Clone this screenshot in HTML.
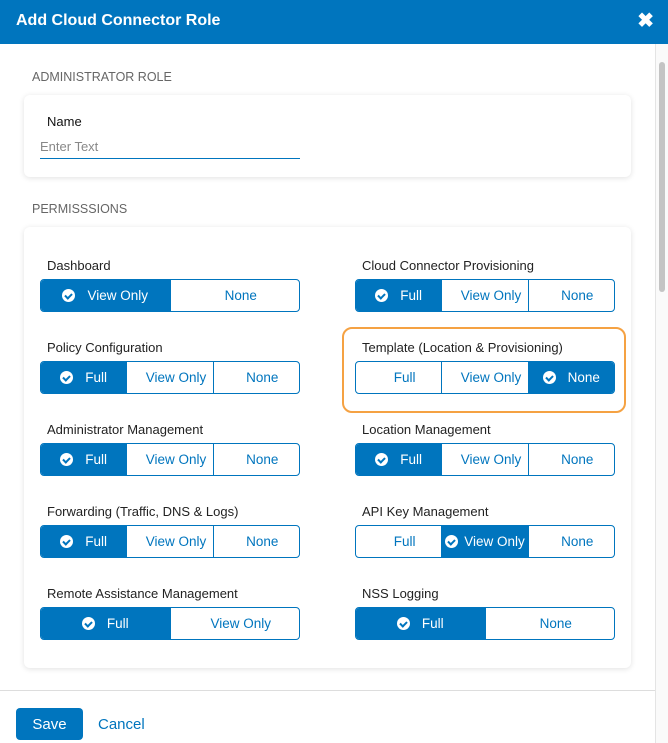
<!DOCTYPE html><html><head><style>
*{box-sizing:border-box;margin:0;padding:0}
body{width:668px;height:743px;overflow:hidden;background:#fff;font-family:"Liberation Sans",sans-serif;position:relative}
.hdr{position:absolute;left:0;top:0;width:668px;height:44px;background:#0075be;color:#fff;font-weight:bold;font-size:16px;line-height:42px;padding-left:16px}
.x{position:absolute;right:14px;top:0;font-size:20px}
.sb{position:absolute;left:655px;top:44px;width:13px;height:699px;border-left:1px solid #e4e4e4;background:#fafafa}
.sb div{position:absolute;left:3px;top:18px;width:6px;height:230px;border-radius:3px;background:#c4c4c4}
.sec{position:absolute;left:32px;font-size:12.5px;color:#666}
.card{position:absolute;left:24px;width:607px;background:#fff;border-radius:6px;box-shadow:0 1px 6px rgba(0,0,0,.12)}
.lbl{position:absolute;font-size:13px;color:#222}
.grp{position:absolute;height:33px;width:260px;display:flex;border:1px solid #0075be;border-radius:4px;overflow:hidden}
.grp div{flex:1 1 0;min-width:0;display:flex;align-items:center;justify-content:center;font-size:13.5px;color:#0075be;border-left:1px solid #0075be;white-space:nowrap}
.grp div:first-child{border-left:none}
.grp div:not(.on){text-indent:12px}
.grp .on{background:#0075be;color:#fff}
.ck{display:inline-block;width:13px;height:13px;border-radius:50%;background:#fff;margin-right:12px;position:relative;flex:none}
.ck:after{content:"";position:absolute;left:4px;top:2.5px;width:3px;height:5px;border:solid #0075be;border-width:0 2px 2px 0;transform:rotate(45deg)}
</style></head><body>
<div class="hdr">Add Cloud Connector Role<span class="x">✖</span></div>
<div class="sb"><div></div></div>
<div class="sec" style="top:70px">ADMINISTRATOR ROLE</div>
<div class="card" style="top:95px;height:82px">
<div class="lbl" style="left:23px;top:19px;font-size:13px;color:#111">Name</div>
<div style="position:absolute;left:16px;top:44px;font-size:13px;color:#888">Enter Text</div>
<div style="position:absolute;left:16px;top:63px;width:260px;height:1px;background:#0075be"></div>
</div>
<div class="sec" style="top:202px">PERMISSSIONS</div>
<div class="card" style="top:227px;height:441px"></div>
<div style="position:absolute;left:342px;top:327px;width:284px;height:86px;border:2px solid #f5a243;border-radius:10px"></div>

<div class="lbl" style="left:47px;top:258px">Dashboard</div>
<div class="grp" style="left:40px;top:279px"><div class="on"><span class="ck"></span>View Only</div><div>None</div></div>
<div class="lbl" style="left:362px;top:258px">Cloud Connector Provisioning</div>
<div class="grp" style="left:355px;top:279px"><div class="on"><span class="ck"></span>Full</div><div>View Only</div><div>None</div></div>

<div class="lbl" style="left:47px;top:340px">Policy Configuration</div>
<div class="grp" style="left:40px;top:361px"><div class="on"><span class="ck"></span>Full</div><div>View Only</div><div>None</div></div>
<div class="lbl" style="left:362px;top:340px">Template (Location &amp; Provisioning)</div>
<div class="grp" style="left:355px;top:361px"><div>Full</div><div>View Only</div><div class="on"><span class="ck"></span>None</div></div>

<div class="lbl" style="left:47px;top:422px">Administrator Management</div>
<div class="grp" style="left:40px;top:443px"><div class="on"><span class="ck"></span>Full</div><div>View Only</div><div>None</div></div>
<div class="lbl" style="left:362px;top:422px">Location Management</div>
<div class="grp" style="left:355px;top:443px"><div class="on"><span class="ck"></span>Full</div><div>View Only</div><div>None</div></div>

<div class="lbl" style="left:47px;top:504px">Forwarding (Traffic, DNS &amp; Logs)</div>
<div class="grp" style="left:40px;top:525px"><div class="on"><span class="ck"></span>Full</div><div>View Only</div><div>None</div></div>
<div class="lbl" style="left:362px;top:504px">API Key Management</div>
<div class="grp" style="left:355px;top:525px"><div>Full</div><div class="on"><span class="ck" style="margin-right:6px"></span>View Only</div><div>None</div></div>

<div class="lbl" style="left:47px;top:586px">Remote Assistance Management</div>
<div class="grp" style="left:40px;top:607px"><div class="on"><span class="ck"></span>Full</div><div>View Only</div></div>
<div class="lbl" style="left:362px;top:586px">NSS Logging</div>
<div class="grp" style="left:355px;top:607px"><div class="on"><span class="ck"></span>Full</div><div>None</div></div>

<div style="position:absolute;left:0;top:690px;width:655px;height:1px;background:#ddd"></div>
<div style="position:absolute;left:16px;top:708px;width:67px;height:32px;background:#0075be;border-radius:4px;color:#fff;font-size:15px;line-height:33px;text-align:center">Save</div>
<div style="position:absolute;left:98px;top:716px;font-size:15px;color:#0075be">Cancel</div>
</body></html>
